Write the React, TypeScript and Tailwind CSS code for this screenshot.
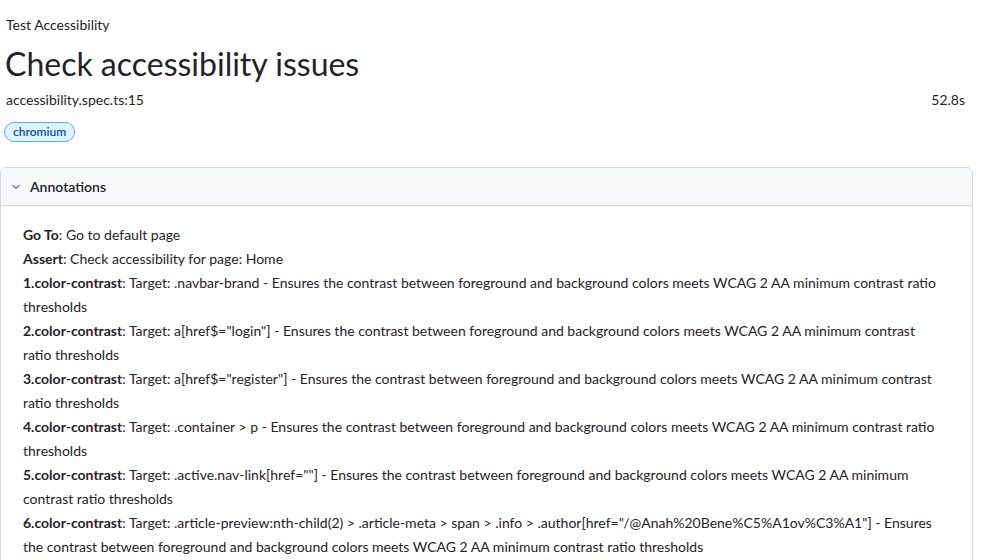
const annotations: { type: string; text: string }[] = [
  { type: "Go To", text: "Go to default page" },
  { type: "Assert", text: "Check accessibility for page: Home" },
  {
    type: "1.color-contrast",
    text: "Target: .navbar-brand - Ensures the contrast between foreground and background colors meets WCAG 2 AA minimum contrast ratio thresholds",
  },
  {
    type: "2.color-contrast",
    text: 'Target: a[href$="login"] - Ensures the contrast between foreground and background colors meets WCAG 2 AA minimum contrast ratio thresholds',
  },
  {
    type: "3.color-contrast",
    text: 'Target: a[href$="register"] - Ensures the contrast between foreground and background colors meets WCAG 2 AA minimum contrast ratio thresholds',
  },
  {
    type: "4.color-contrast",
    text: "Target: .container > p - Ensures the contrast between foreground and background colors meets WCAG 2 AA minimum contrast ratio thresholds",
  },
  {
    type: "5.color-contrast",
    text: 'Target: .active.nav-link[href=""] - Ensures the contrast between foreground and background colors meets WCAG 2 AA minimum contrast ratio thresholds',
  },
  {
    type: "6.color-contrast",
    text: 'Target: .article-preview:nth-child(2) > .article-meta > span > .info > .author[href="/@Anah%20Bene%C5%A1ov%C3%A1"] - Ensures the contrast between foreground and background colors meets WCAG 2 AA minimum contrast ratio thresholds',
  },
];

export default function App() {
  return (
    <div className="w-[990px] h-[560px] overflow-hidden bg-white text-[#1f2328] font-['Segoe_UI','Lato',sans-serif]">
      <div className="pr-[17px]">
        <div className="px-[6px] pt-[16px] text-[14px] leading-[18px]">Test Accessibility</div>
        <h1 className="px-[5px] mt-[10px] text-[32px] leading-[40px] font-normal">Check accessibility issues</h1>
        <div className="flex justify-between pl-[6px] pr-[8px] mt-[7px] text-[14px] leading-[18px]">
          <span>accessibility.spec.ts:15</span>
          <span>52.8s</span>
        </div>
        <div className="pl-[4px] mt-[13px] flex">
          <span className="rounded-full border border-[#54aeff] bg-[#ddf4ff] px-[8px] text-[12px] leading-[18px] font-semibold text-[#0550ae]">
            chromium
          </span>
        </div>
        <div className="mt-[25px] rounded-md border border-[#d0d7de]">
          <div className="flex items-center h-[38px] bg-[#f6f8fa] border-b border-[#d0d7de] rounded-t-md pl-[9px]">
            <svg width="12" height="12" viewBox="0 0 16 16" className="text-[#59636e]" fill="currentColor">
              <path d="M12.78 5.22a.749.749 0 0 1 0 1.06l-4.25 4.25a.749.749 0 0 1-1.06 0L3.22 6.28a.749.749 0 1 1 1.06-1.06L8 8.939l3.72-3.719a.749.749 0 0 1 1.06 0Z" />
            </svg>
            <span className="ml-[8px] text-[14px] font-semibold">Annotations</span>
          </div>
          <div className="pl-[22px] pr-[30px] pt-[17px] pb-[16px] text-[14px] leading-[24px]">
            {annotations.map((a) => (
              <div key={a.type}>
                <span className="font-bold">{a.type}</span>: {a.text}
              </div>
            ))}
          </div>
        </div>
      </div>
    </div>
  );
}
